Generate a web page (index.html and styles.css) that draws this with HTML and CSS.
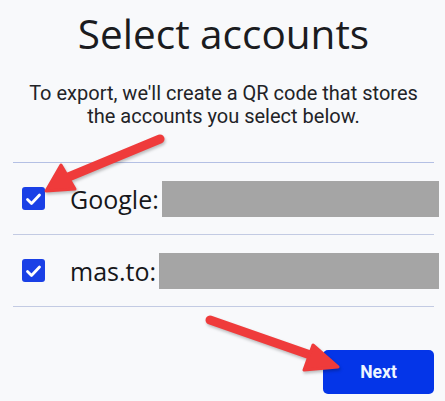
FILE: index.html
```html
<!DOCTYPE html>
<html lang="en">
<head>
<meta charset="utf-8">
<title>Select accounts</title>
<link rel="stylesheet" href="styles.css">
</head>
<body>
<main class="screen">
  <h1 class="title">Select accounts</h1>
  <p class="intro">To export, we'll create a QR code that stores the accounts you select below.</p>

  <ul class="accounts">
    <li class="account">
      <span class="check">
        <svg viewBox="0 0 23 23" width="23" height="23"><path d="M5.5 12.5l4 4 8-8.5" fill="none" stroke="#fff" stroke-width="2.8" stroke-linecap="round" stroke-linejoin="round"/></svg>
      </span>
      <span class="name">Google:</span>
      <span class="redacted"></span>
    </li>
    <li class="account">
      <span class="check">
        <svg viewBox="0 0 23 23" width="23" height="23"><path d="M5.5 12.5l4 4 8-8.5" fill="none" stroke="#fff" stroke-width="2.8" stroke-linecap="round" stroke-linejoin="round"/></svg>
      </span>
      <span class="name">mas.to:</span>
      <span class="redacted"></span>
    </li>
  </ul>

  <div class="actions">
    <button class="next" type="button">Next</button>
  </div>

  <!-- callout arrows drawn over the page -->
  <svg class="callouts" viewBox="0 0 445 401" width="445" height="401">
    <g fill="#ef3b3b" stroke="#ef3b3b" stroke-linejoin="round">
      <line x1="160" y1="139" x2="66" y2="178" stroke-width="9" stroke-linecap="round"/>
      <polygon points="46,191 61,165 75,189" stroke-width="3"/>
      <line x1="210" y1="320" x2="316" y2="357" stroke-width="9" stroke-linecap="round"/>
      <polygon points="338,367 313,345 304,370" stroke-width="3"/>
    </g>
  </svg>
</main>
</body>
</html>
```

FILE: styles.css
```css
* { box-sizing: border-box; }

html, body {
  margin: 0;
  padding: 0;
  background: #f8f9fb;
}

.screen {
  position: relative;
  width: 445px;
  height: 401px;
  overflow: hidden;
  font-family: Roboto, "Open Sans", sans-serif;
  color: #1b1c1f;
  padding: 8px 11px 0 13px;
}

.title {
  margin: 0;
  text-align: center;
  font-family: "Open Sans", Roboto, sans-serif;
  font-weight: 400;
  font-size: 40.5px;
  line-height: 52px;
  letter-spacing: 0;
}

.intro {
  max-width: 400px;
  margin: 22px auto 0;
  text-align: center;
  font-size: 20px;
  line-height: 23px;
  color: #222327;
}

.accounts {
  list-style: none;
  margin: 34px 0 0;
  padding: 0;
  border-top: 1.5px solid #b4c0e4;
}

.account {
  display: flex;
  align-items: center;
  height: 72px;
  border-bottom: 1.5px solid #c3cbe3;
  padding-left: 9px;
}

.check {
  flex: none;
  width: 23px;
  height: 23px;
  border-radius: 3px;
  background: #1a40e6;
  display: flex;
}

.name {
  margin-left: 25px;
  font-size: 25px;
  font-family: "Open Sans", Roboto, sans-serif;
  color: #16171a;
}

.redacted {
  flex: 1;
  align-self: center;
  height: 36px;
  margin-left: 3px;
  margin-right: -5px;
  background: #a5a5a5;
}

.actions {
  display: flex;
  justify-content: flex-end;
  margin-top: 43px;
}

.next {
  width: 111px;
  height: 44px;
  border: none;
  border-radius: 5px;
  background: #0435e8;
  color: #eef6ff;
  font-family: Roboto, sans-serif;
  font-weight: 700;
  font-size: 17.5px;
  padding: 0;
}

.callouts {
  position: absolute;
  left: 0;
  top: 0;
  pointer-events: none;
  filter: drop-shadow(1px 2px 1.5px rgba(0, 0, 0, 0.25));
}
```
